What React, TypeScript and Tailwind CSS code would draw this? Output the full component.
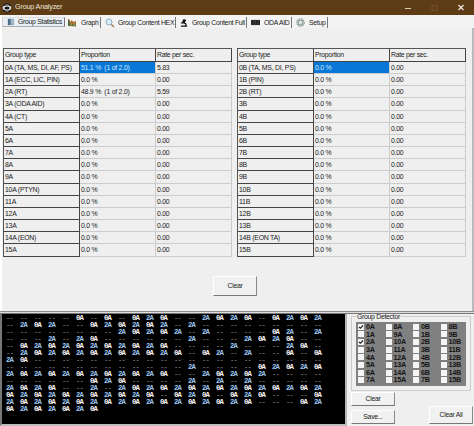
import React from "react";

const GROUPS_A = ["0A (TA, MS, DI, AF, PS)", "1A (ECC, LIC, PIN)", "2A (RT)", "3A (ODA AID)", "4A (CT)", "5A", "6A", "7A", "8A", "9A", "10A (PTYN)", "11A", "12A", "13A", "14A (EON)", "15A"];
const GROUPS_B = ["0B (TA, MS, DI, PS)", "1B (PIN)", "2B (RT)", "3B", "4B", "5B", "6B", "7B", "8B", "9B", "10B", "11B", "12B", "13B", "14B (EON TA)", "15B"];

// One character per received group: 0 = 0A, 2 = 2A, - = nothing decoded.
const STREAM = [
  "-----0-0-020--2020-0202",
  "-202--020202-2---------",
  "--------20202-2----02-2",
  "---2-20------2---2020--",
  "-02020202020----2---20-",
  "-202020202020-02-2--0-0",
  "20---------------------",
  "-------------2----02020",
  "202020202020--20202----",
  "------020----2-2-2-----",
  "2020--2-202020202020202",
  "02020202020-020-020---0",
  "202020202020202020---02",
  "0202020",
];

function StatTable({ groups, values }: { groups: string[]; values: Record<number, [string, string]> }) {
  return (
    <div className="w-[229px] border-t border-l border-[#555]">
      <div className="grid h-[13px] grid-cols-[76px_76px_76px] leading-[11px]">
        {["Group type", "Proportion", "Rate per sec."].map((h) => (
          <div key={h} className="border-r border-b border-[#444] pl-[1px]">{h}</div>
        ))}
      </div>
      {groups.map((g, i) => {
        const [p, r] = values[i] ?? ["0.0 %", "0.00"];
        return (
          <div key={g} className="grid h-[12.17px] grid-cols-[76px_76px_76px] leading-[11px] tracking-[-0.24px] whitespace-pre">
            <div className="border-r border-b border-[#444] pl-[1px]">{g}</div>
            <div className={"border-r border-b border-[#ccc] pl-[1px] " + (i === 0 ? "bg-[#0877d7] text-[#d4eaff]" : "")}>{p}</div>
            <div className="border-r border-b border-[#ccc] pl-[1px]">{r}</div>
          </div>
        );
      })}
    </div>
  );
}

function Button({ label, className }: { label: string; className: string }) {
  return (
    <div className={"flex items-center justify-center border-t border-l border-t-white border-l-white border-r border-b border-r-[#888] border-b-[#777] bg-[#f1f1f1] " + className}>
      {label}
    </div>
  );
}

function Tab({ label, width, gap, children }: { label: string; width: string; gap: string; children: React.ReactNode }) {
  return (
    <div className={"flex h-[11px] items-center border-r border-[#777] " + width + " " + gap}>
      {children}
      <span className="pt-[1px]">{label}</span>
    </div>
  );
}

function Detector() {
  const names = Array.from({ length: 8 }, (_, i) => [`${i}A`, `${i + 8}A`, `${i}B`, `${i + 8}B`]).flat();
  return (
    <div className="mt-[3px] grid h-[64px] w-[110px] grid-cols-[27.5px_27.5px_27.5px_1fr] grid-rows-8 bg-[#808080] pt-[1px] pb-[2px] pl-[2px] text-[7.2px] leading-[7.6px] tracking-[-0.3px] text-[#151515]">
      {names.map((n) => (
        <div key={n} className="flex items-center gap-[2px]">
          <span className="flex size-[6px] items-center justify-center bg-[#f5f5f5]">
            {(n === "0A" || n === "2A") && (
              <svg viewBox="0 0 6 6" className="size-[6px]"><path d="M1 2.8 2.3 4.3 5 1.5" fill="none" stroke="#111" strokeWidth="1.1" /></svg>
            )}
          </span>
          <span className="font-bold">{n}</span>
        </div>
      ))}
    </div>
  );
}

export default function App() {
  return (
    <div className="flex h-[426px] w-[474px] flex-col overflow-hidden bg-[#efefef] font-['Liberation_Sans',Arial,sans-serif] text-[6.9px] tracking-[-0.3px] whitespace-nowrap text-[#222]">
      <header className="flex h-[15px] shrink-0 items-center bg-[#5d3c16] pl-[2px] text-[#eee5d8]">
        <svg viewBox="0 0 10 10" className="mr-[3px] size-[10px]">
          <circle cx="5" cy="5" r="4.7" fill="#151515" />
          <ellipse cx="5" cy="5" rx="4.4" ry="2.4" fill="#eee" />
          <ellipse cx="5" cy="5" rx="2.7" ry="1.6" fill="#111" />
          <path d="M3 2.3Q5 .9 7 2.3M3 7.7Q5 9.1 7 7.7" fill="none" stroke="#ddd" strokeWidth=".6" />
        </svg>
        <span className="text-[7.2px] tracking-[-0.17px]">Group Analyzer</span>
        <svg viewBox="0 0 62 9" className="mr-[8px] ml-auto h-[9px] w-[62px]" fill="none">
          <path d="M1 5.5h6" stroke="#d6c8b7" />
          <path d="M28 2.5h5v5h-5z" stroke="#7b5029" />
          <path d="m54.5 2 5 5m0-5-5 5" stroke="#f5eee6" strokeWidth="1.1" />
        </svg>
      </header>

      <main className="flex h-[296px] shrink-0 flex-col border-l-2 border-white">
        <nav className="flex h-[13px] items-start bg-[#f3f3f3] pt-[2px]">
          <div className="flex h-[10px] w-[63px] items-center border-t border-l border-r border-b border-t-[#ddd] border-l-[#ccc] border-r-[#777] border-b-[#aaa] bg-[#eaf0f7] pl-[4px]">
            <svg viewBox="0 0 9 9" className="mr-[3px] size-[8px]"><path d="M1 1h7v7H1z" fill="#91a9bb" /><path d="M1 1h3v7H1z" fill="#4d6f89" /><path d="M5 3h2M5 5h2" stroke="#d4e1e9" /></svg>
            <span>Group Statistics</span>
          </div>
          <Tab label="Graph" width="w-[36px]" gap="pl-[3px] gap-[4px]">
            <svg viewBox="0 0 9 9" className="size-[9px]"><path d="M0 1 2 2v2l2-2 1 2 3-1v5H1z" fill="#a66b30" /><path d="M0 1v7l8 .5V7L2 5z" fill="#49713e" /><path d="M3 5v3M6 5v3" stroke="#d99a43" /></svg>
          </Tab>
          <Tab label="Group Content HEX" width="w-[75px]" gap="pl-[4px] gap-[3px]">
            <svg viewBox="0 0 10 10" className="size-[10px]" fill="none"><path d="m6 6 3 3" stroke="#a67e5b" strokeWidth="1.5" /><circle cx="4" cy="4" r="3" fill="#d8efff" stroke="#91aabd" /></svg>
          </Tab>
          <Tab label="Group Content Full" width="w-[71px]" gap="pl-[4px] gap-[4px]">
            <svg viewBox="0 0 9 9" className="size-[8px]"><path d="m4 0 3 1-2 4-3-1z" fill="#111" /><path d="M1 4.5h4M5 5q3 0 1 3M1 8h7" fill="none" stroke="#111" strokeWidth="1.3" /></svg>
          </Tab>
          <Tab label="ODA AID" width="w-[45px]" gap="pl-[4px] gap-[4px]">
            <svg viewBox="0 0 9 7" className="h-[7px] w-[9px]"><path d="M0 1h9v5H0z" fill="#222" /><path d="M2 0v7M4.5 0v7M7 0v7" stroke="#777" strokeWidth=".4" /></svg>
          </Tab>
          <Tab label="Setup" width="w-[36px]" gap="pl-[4px] gap-[4px]">
            <svg viewBox="0 0 10 10" className="size-[9px]" fill="none"><circle cx="5" cy="5" r="4.2" stroke="#87968e" strokeWidth="1.2" strokeDasharray="1.6 .9" /><circle cx="5" cy="5" r="2.8" fill="#d2dfdc" stroke="#879c96" strokeWidth="1.3" /><circle cx="5" cy="5" r="1" fill="#f5f5f5" /></svg>
          </Tab>
        </nav>
        <section className="flex flex-1 flex-col border-r-2 border-[#b9b9bd] pt-[20px] pl-[1px]">
          <div className="flex gap-[5px]">
            <StatTable groups={GROUPS_A} values={{ 0: ["51.1 %  (1 of 2.0)", "5.83"], 2: ["48.9 %  (1 of 2.0)", "5.59"] }} />
            <StatTable groups={GROUPS_B} values={{}} />
          </div>
          <Button label="Clear" className="mt-[19px] ml-[210px] h-[20px] w-[44px] pt-[1px]" />
        </section>
      </main>

      <div className="h-[3px] shrink-0 border-y border-t-[#8b8b8b] border-b-[#77777b] bg-[#ddd]" />
      <div className="flex h-[112px] shrink-0">
        <div className="h-[112px] w-[347px] shrink-0 border-r-2 border-b-2 border-l-2 border-r-[#b5b5b5] border-b-[#bbb] border-l-[#777] bg-black pt-[1px]">
          {STREAM.map((row, y) => (
            <div key={y} className="flex h-[7px] pl-[4px] font-['Liberation_Mono',monospace] text-[7.2px] leading-[7px] font-bold tracking-[-0.7px]">
              {row.split("").map((c, x) => (
                <span key={x} className={"w-[14px] " + (c === "-" ? "font-normal text-[#999]" : c === "0" ? "text-[#fffafa]" : "text-[#9fc9f3]")}>
                  {c === "-" ? "--" : c + "A"}
                </span>
              ))}
            </div>
          ))}
        </div>
        <aside className="flex w-[127px] flex-col pl-[4px]">
          <fieldset className="h-[77px] w-[120px] min-w-0 shrink-0 border border-[#ccc] pl-[4px]">
            <legend className="h-[5px] px-[1px] leading-[5px]">Group Detector</legend>
            <Detector />
          </fieldset>
          <div className="flex gap-[34px]">
            <div className="flex flex-col gap-[4px] pt-[1px]">
              <Button label="Clear" className="h-[14px] w-[44px]" />
              <Button label="Save..." className="h-[14px] w-[44px]" />
            </div>
            <Button label="Clear All" className="mt-[15px] h-[18px] w-[44px]" />
          </div>
        </aside>
      </div>
    </div>
  );
}
